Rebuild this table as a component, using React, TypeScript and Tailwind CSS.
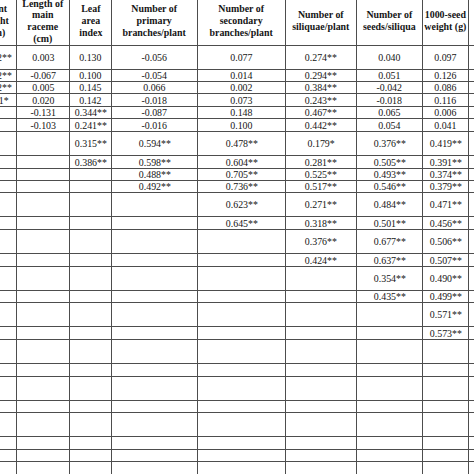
const COLS = [
  "w-[42px]",
  "w-[53px]",
  "w-[42px]",
  "w-[86px]",
  "w-[88px]",
  "w-[71px]",
  "w-[66px]",
  "w-[46px]",
  "w-[40px]",
];

const HEADERS: string[][] = [
  ["Plant", "height", "(cm)"],
  ["Length of", "main", "raceme", "(cm)"],
  ["Leaf", "area", "index"],
  ["Number of", "primary", "branches/plant"],
  ["Number of", "secondary", "branches/plant"],
  ["Number of", "siliquae/plant"],
  ["Number of", "seeds/siliqua"],
  ["1000-seed", "weight (g)"],
  [],
];

interface Row {
  h: string;
  cells: string[];
}

const ROWS: Row[] = [
  { h: "h-[24px]", cells: ["0.312**", "0.003", "0.130", "-0.056", "0.077", "0.274**", "0.040", "0.097"] },
  { h: "h-[12px]", cells: ["0.402**", "-0.067", "0.100", "-0.054", "0.014", "0.294**", "0.051", "0.126"] },
  { h: "h-[12px]", cells: ["0.332**", "0.005", "0.145", "0.066", "0.002", "0.384**", "-0.042", "0.086"] },
  { h: "h-[13px]", cells: ["0.161*", "0.020", "0.142", "-0.018", "0.073", "0.243**", "-0.018", "0.116"] },
  { h: "h-[12px]", cells: ["", "-0.131", "0.344**", "-0.087", "0.148", "0.467**", "0.065", "0.006"] },
  { h: "h-[13px]", cells: ["", "-0.103", "0.241**", "-0.016", "0.100", "0.442**", "0.054", "0.041"] },
  { h: "h-[24px]", cells: ["", "", "0.315**", "0.594**", "0.478**", "0.179*", "0.376**", "0.419**"] },
  { h: "h-[13px]", cells: ["", "", "0.386**", "0.598**", "0.604**", "0.281**", "0.505**", "0.391**"] },
  { h: "h-[12px]", cells: ["", "", "", "0.488**", "0.705**", "0.525**", "0.493**", "0.374**"] },
  { h: "h-[12px]", cells: ["", "", "", "0.492**", "0.736**", "0.517**", "0.546**", "0.379**"] },
  { h: "h-[24px]", cells: ["", "", "", "", "0.623**", "0.271**", "0.484**", "0.471**"] },
  { h: "h-[13px]", cells: ["", "", "", "", "0.645**", "0.318**", "0.501**", "0.456**"] },
  { h: "h-[24px]", cells: ["", "", "", "", "", "0.376**", "0.677**", "0.506**"] },
  { h: "h-[13px]", cells: ["", "", "", "", "", "0.424**", "0.637**", "0.507**"] },
  { h: "h-[24px]", cells: ["", "", "", "", "", "", "0.354**", "0.490**"] },
  { h: "h-[12px]", cells: ["", "", "", "", "", "", "0.435**", "0.499**"] },
  { h: "h-[24px]", cells: ["", "", "", "", "", "", "", "0.571**"] },
  { h: "h-[13px]", cells: ["", "", "", "", "", "", "", "0.573**"] },
  { h: "h-[24px]", cells: [] },
  { h: "h-[13px]", cells: [] },
  { h: "h-[24px]", cells: [] },
  { h: "h-[12px]", cells: [] },
  { h: "h-[24px]", cells: [] },
  { h: "h-[13px]", cells: [] },
  { h: "h-[12px]", cells: [] },
  { h: "h-[13px]", cells: [] },
  { h: "h-[24px]", cells: [] },
];

export default function App() {
  return (
    <div className="w-[474px] h-[474px] overflow-hidden bg-white font-['Liberation_Serif',serif] text-[#151515]">
      <div className="-mt-[3px] -ml-[25px] w-max">
        {/* header */}
        <div className="flex h-[49px] border-b border-[#4d4d4d]">
          {HEADERS.map((lines, i) => (
            <div
              key={i}
              className={`${COLS[i]} shrink-0 flex items-center justify-center border-r border-[#4d4d4d] whitespace-nowrap`}
            >
              <div className="flex flex-col items-center scale-x-[0.9] text-[11px] font-bold leading-[11.7px]">
                {lines.map((l) => (
                  <span key={l}>{l}</span>
                ))}
              </div>
            </div>
          ))}
        </div>
        {ROWS.map((row, r) => (
          <div key={r} className={`flex ${row.h} border-b border-[#4d4d4d]`}>
            {COLS.map((w, i) => (
              <div
                key={i}
                className={`${w} shrink-0 flex items-center justify-center border-r border-[#4d4d4d] whitespace-nowrap`}
              >
                <span className="inline-block scale-x-[0.9] text-[11px] leading-none">{row.cells[i] ?? ""}</span>
              </div>
            ))}
          </div>
        ))}
      </div>
    </div>
  );
}
